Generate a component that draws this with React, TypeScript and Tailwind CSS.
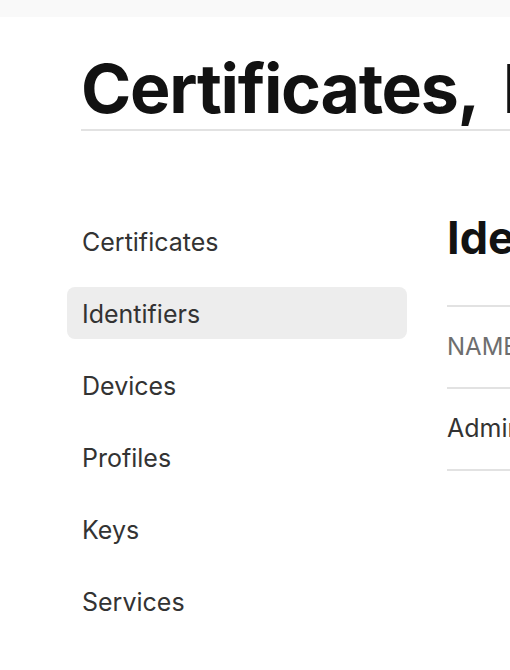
import React from "react";

const navItems = ["Certificates", "Identifiers", "Devices", "Profiles", "Keys", "Services"];

export default function App() {
  return (
    <div className="min-h-screen w-[510px] overflow-hidden bg-white font-['Inter',sans-serif]">
      {/* top strip */}
      <div className="h-[17px] bg-[#f9f9f9]" />

      <div className="pl-[81px]">
        <h1 className="w-[760px] whitespace-nowrap border-b-2 border-[#e2e2e2] pt-[31px] pb-[1px] text-[68px] leading-[80px] font-bold tracking-[-1.3px] [word-spacing:11px] text-[#121212]">
          Certificates, Identifiers &amp; Profiles
        </h1>
      </div>

      <div className="mt-[84px] flex pl-[67px]">
        {/* sidebar */}
        <nav className="flex w-[340px] shrink-0 flex-col gap-[20px]">
          {navItems.map((item) => (
            <div
              key={item}
              className={`flex h-[52px] items-center rounded-[8px] px-[15px] pt-[3px] text-[25px] text-[#333333] ${
                item === "Identifiers" ? "bg-[#ededed]" : ""
              }`}
            >
              {item}
            </div>
          ))}
        </nav>

        {/* main */}
        <main className="ml-[40px] w-[500px] shrink-0">
          <h2 className="mt-[-5px] whitespace-nowrap text-[45px] leading-[56px] font-bold text-[#121212]">
            Identifiers
          </h2>
          <div className="mt-[39px] border-t-2 border-[#e2e2e2]">
            <div className="flex h-[82px] items-center border-b-2 border-[#e2e2e2] text-[24px] text-[#6e6e6e]">
              NAME
            </div>
            <div className="flex h-[82px] items-center border-b-2 border-[#e2e2e2] text-[25px] text-[#333333]">
              Administrator
            </div>
          </div>
        </main>
      </div>
    </div>
  );
}
